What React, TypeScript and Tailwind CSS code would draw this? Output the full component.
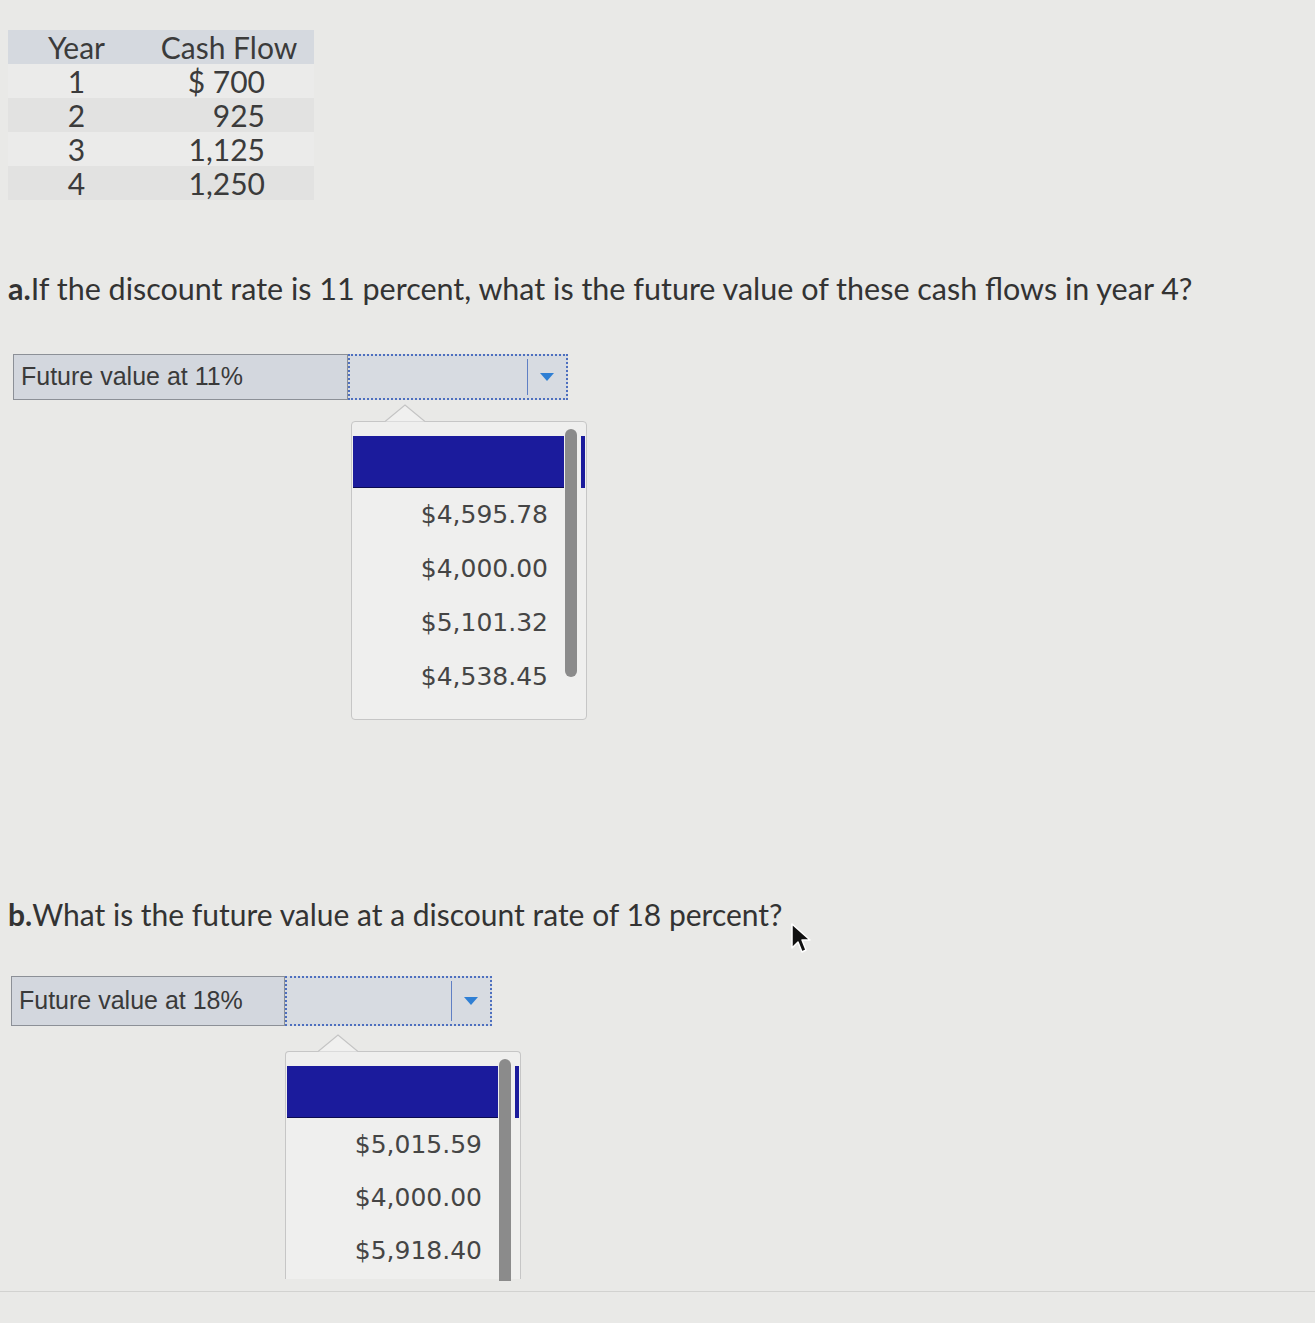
import React from "react";

const rows = [
  { y: "1", v: "$ 700", bg: "bg-[#ebebea]" },
  { y: "2", v: "925", bg: "bg-[#e2e2e1]" },
  { y: "3", v: "1,125", bg: "bg-[#ebebea]" },
  { y: "4", v: "1,250", bg: "bg-[#e2e2e1]" },
];

function Arrow() {
  return (
    <svg width="16" height="10" viewBox="0 0 16 10" className="block">
      <path d="M1 1 L15 1 L8 9 Z" fill="#2f7fd4" />
    </svg>
  );
}

function InputRow({
  label,
  labelW,
  dropW,
  h,
}: {
  label: string;
  labelW: string;
  dropW: string;
  h: string;
}) {
  return (
    <div className={`flex ${h}`}>
      <div
        className={`${labelW} h-full bg-[#d3d7de] border border-[#8c9097] flex items-center pl-[7px] text-[25px] text-[#3a3a3a]`}
        style={{ fontFamily: '"Liberation Sans", Arial, sans-serif' }}
      >
        {label}
      </div>
      <div
        className={`${dropW} h-full bg-[#d7dbe1] border-2 border-dotted border-[#4d6fbf] flex justify-end items-stretch py-[3px]`}
      >
        <div className="w-[1px] bg-[#5f7fc4]" />
        <div className="w-[38px] flex items-center justify-center">
          <Arrow />
        </div>
      </div>
    </div>
  );
}

function Popup({
  items,
  w,
  rowH,
  pr,
  cut,
  h,
  notchX,
}: {
  items: string[];
  w: string;
  rowH: string;
  pr: string;
  cut?: boolean;
  h: string;
  notchX: string;
}) {
  return (
    <div className={`relative ${w} ${h}`}>
      <svg
        className={`absolute -top-[17px] ${notchX}`}
        width="40"
        height="18"
        viewBox="0 0 40 18"
      >
        <path d="M0 17.5 L20 1 L40 17.5" fill="#f0f0ef" stroke="#c4c4c4" strokeWidth="1.2" />
      </svg>
      <div
        className={`h-full bg-[#efefee] border border-[#c6c6c6] ${
          cut ? "border-b-0 rounded-t-[4px]" : "rounded-[4px]"
        } flex pt-[14px] pl-[1px]`}
      >
        <div className="flex-1 flex flex-col">
          <div className="h-[52px] bg-[#1b1b9c] border-b border-[#0b0b50]" />
          {items.map((it) => (
            <div
              key={it}
              className={`${rowH} flex items-center justify-end ${pr} text-[25px] text-[#454545]`}
              style={{ fontFamily: '"DejaVu Sans", Verdana, sans-serif' }}
            >
              {it}
            </div>
          ))}
        </div>
        <div className="w-[22px] relative -mt-[7px]">
          <div
            className={`absolute left-[1px] w-[12px] top-0 ${
              cut ? "bottom-[-2px] rounded-t-full" : "h-[248px] rounded-full"
            } bg-[#8b8b8b]`}
          />
          <div className="absolute right-[1px] w-[4px] top-[7px] h-[52px] bg-[#1b1b9c]" />
        </div>
      </div>
    </div>
  );
}

export default function App() {
  return (
    <div
      className="relative min-h-[1323px] w-full bg-[#e9e9e7] text-[#333] overflow-hidden"
      style={{ fontFamily: 'Lato, "Open Sans", sans-serif' }}
    >
      {/* table */}
      <div className="ml-[8px] pt-[30px] w-[306px] text-[30px] leading-[34px] text-[#3b3b3b]">
        <div className="flex h-[34px] bg-[#d5d9df] items-center">
          <div className="w-[137px] text-center">Year</div>
          <div className="flex-1 text-center pr-[1px]">Cash Flow</div>
        </div>
        {rows.map((r) => (
          <div key={r.y} className={`flex h-[34px] items-center ${r.bg}`}>
            <div className="w-[137px] text-center">{r.y}</div>
            <div className="flex-1 text-right pr-[49px]">{r.v}</div>
          </div>
        ))}
      </div>

      {/* question a */}
      <div className="ml-[8px] mt-[71px] text-[30.5px] leading-[34px] text-[#333] whitespace-nowrap">
        <span className="font-bold">a.</span>If the discount rate is 11 percent, what is the future value of these cash flows in year 4?
      </div>

      <div className="ml-[13px] mt-[49px]">
        <InputRow label="Future value at 11%" labelW="w-[335px]" dropW="w-[220px]" h="h-[46px]" />
      </div>

      <div className="ml-[351px] mt-[21px]">
        <Popup
          items={["$4,595.78", "$4,000.00", "$5,101.32", "$4,538.45"]}
          w="w-[236px]"
          rowH="h-[54px]"
          pr="pr-[16px]"
          h="h-[299px]"
          notchX="left-[34px]"
        />
      </div>

      {/* question b */}
      <div className="ml-[8px] mt-[177px] text-[30px] leading-[34px] text-[#333] whitespace-nowrap">
        <span className="font-bold">b.</span>What is the future value at a discount rate of 18 percent?
      </div>

      <div className="ml-[11px] mt-[45px]">
        <InputRow label="Future value at 18%" labelW="w-[274px]" dropW="w-[207px]" h="h-[50px]" />
      </div>

      <div className="ml-[285px] mt-[25px]">
        <Popup
          items={["$5,015.59", "$4,000.00", "$5,918.40"]}
          w="w-[236px]"
          rowH="h-[53px]"
          pr="pr-[16px]"
          cut
          h="h-[228px]"
          notchX="left-[33px]"
        />
      </div>

      <div className="mt-[12px] h-[1px] bg-[#d2d2d0]" />

      {/* cursor */}
      <svg
        className="absolute left-[790px] top-[922px]"
        width="22"
        height="34"
        viewBox="0 0 22 34"
      >
        <path
          d="M2 2 L2 26 L8 20 L12 30 L16 28 L12 18 L20 18 Z"
          fill="#111"
          stroke="#fff"
          strokeWidth="1.5"
          strokeLinejoin="round"
        />
      </svg>
    </div>
  );
}
